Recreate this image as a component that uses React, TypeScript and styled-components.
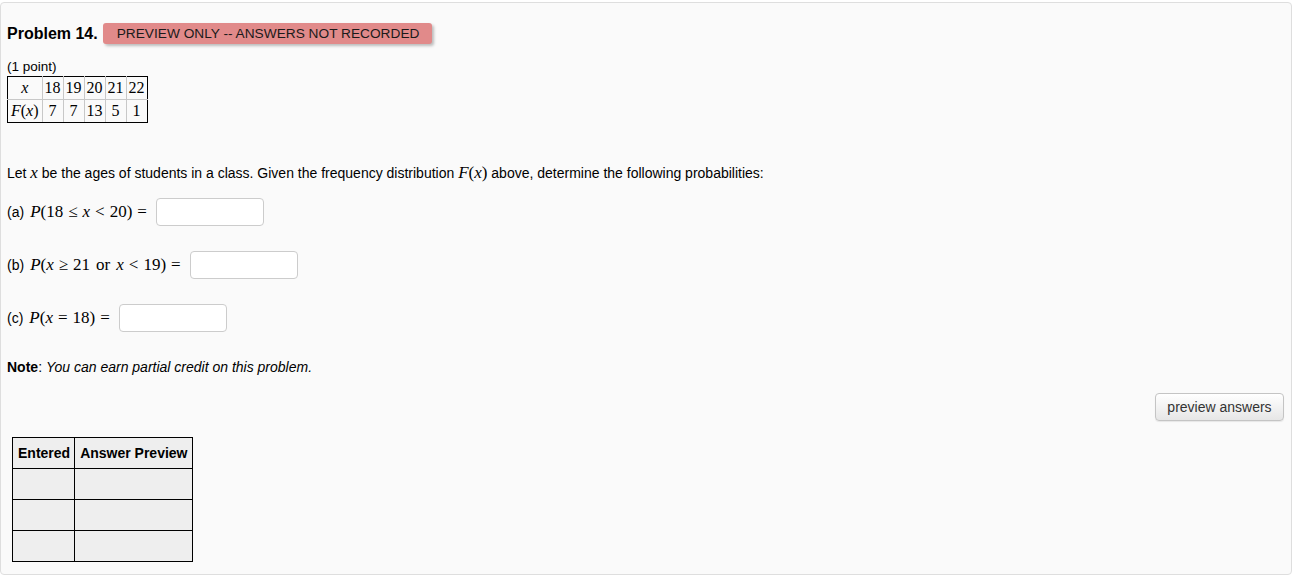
import styled, { createGlobalStyle } from "styled-components";

const GlobalStyle = createGlobalStyle`
  body {
    margin: 0;
    background: #ffffff;
    font-family: "Liberation Sans", Arial, sans-serif;
    color: #000;
  }
`;

// styled-components

const Panel = styled.div`
  margin-top: 2px;
  width: 1292px;
  height: 573px;
  box-sizing: border-box;
  border: 1px solid #dedede;
  border-radius: 4px;
  background: #fafafa;
  padding: 0 7px 0 6px;
`;

const Header = styled.div`
  display: flex;
  align-items: center;
  gap: 5px;
  margin-top: 20px;
  height: 21px;
`;

const Title = styled.h3`
  margin: 0;
  font-size: 16px;
  font-weight: bold;
`;

const Badge = styled.span`
  display: inline-block;
  height: 21px;
  line-height: 21px;
  padding: 0 13px 0 14px;
  background: #e18a8a;
  border-radius: 3px;
  box-shadow: 2px 2px 3px rgba(0, 0, 0, 0.25);
  font-size: 13.7px;
  color: #1a1a1a;
  white-space: nowrap;
`;

const Text = styled.div<{ $top: number }>`
  margin-top: ${(p) => p.$top}px;
  font-size: 14px;
  line-height: 18px;
`;

const Points = styled.div`
  margin-top: 15px;
  font-size: 13.5px;
  line-height: 16px;
`;

const DataTable = styled.table`
  margin-top: 1px;
  border-collapse: collapse;
  font-family: "Liberation Serif", "Times New Roman", serif;
  font-size: 16px;

  td {
    border: 1px solid #c8c8c8;
    height: 22px;
    padding: 0 2px;
    text-align: center;
    line-height: 20px;
  }

  td:first-child {
    padding: 0 3px;
    border-left-color: #000;
  }

  td:last-child {
    border-right-color: #000;
  }

  tr:first-child td {
    border-top-color: #000;
  }

  tr:last-child td {
    border-bottom-color: #000;
  }
`;

const MathVar = styled.i`
  font-family: "Liberation Serif", "Times New Roman", serif;
  font-size: 17px;
`;

const Math = styled.span`
  font-family: "Liberation Serif", "Times New Roman", serif;
  font-size: 17px;
  margin-left: 6px;
  white-space: nowrap;
`;

const Paren = styled.span`
  font-family: "Liberation Serif", "Times New Roman", serif;
  font-size: 17px;
`;

const Rel = styled.span`
  margin: 0 5px;
`;

const Word = styled.span`
  margin: 0 6px;
`;

const QuestionRow = styled.div<{ $top: number }>`
  display: flex;
  align-items: center;
  margin-top: ${(p) => p.$top}px;
  font-size: 14px;
  height: 28px;
`;

const AnswerInput = styled.input`
  width: 108px;
  height: 28px;
  box-sizing: border-box;
  margin-left: 4px;
  border: 1px solid #cccccc;
  border-radius: 4px;
  background: #ffffff;
  padding: 4px 6px;
`;

const NoteLabel = styled.b`
  font-weight: bold;
`;

const ButtonRow = styled.div`
  display: flex;
  justify-content: flex-end;
  margin-top: 17px;
`;

const PreviewButton = styled.button`
  height: 28px;
  width: 129px;
  font-family: "Liberation Sans", Arial, sans-serif;
  font-size: 14px;
  color: #333;
  background: linear-gradient(#ffffff, #e6e6e6);
  border: 1px solid #c4c4c4;
  border-radius: 4px;
  box-shadow: 0 1px 1px rgba(0, 0, 0, 0.08);
`;

const ResultsTable = styled.table`
  margin-top: 16px;
  margin-left: 5px;
  border-collapse: collapse;
  background: #eeeeee;

  th,
  td {
    border: 1.5px solid #000;
    height: 30px;
    padding: 0 4px 0 5px;
    font-size: 14px;
    text-align: left;
    white-space: nowrap;
  }

  th {
    font-weight: bold;
  }
`;

const Cell = styled.td<{ $w: number }>`
  width: ${(p) => p.$w}px;
`;

const ages = ["18", "19", "20", "21", "22"];
const counts = ["7", "7", "13", "5", "1"];

export default function App() {
  return (
    <>
      <GlobalStyle />
      <Panel>
        <Header>
          <Title>Problem 14.</Title>
          <Badge>PREVIEW ONLY -- ANSWERS NOT RECORDED</Badge>
        </Header>

        <Points>(1 point)</Points>
        <DataTable>
          <tbody>
            <tr>
              <td>
                <i>x</i>
              </td>
              {ages.map((a) => (
                <td key={a}>{a}</td>
              ))}
            </tr>
            <tr>
              <td>
                <i>F</i>(<i>x</i>)
              </td>
              {counts.map((c, i) => (
                <td key={i}>{c}</td>
              ))}
            </tr>
          </tbody>
        </DataTable>

        <Text $top={41}>
          Let <MathVar>x</MathVar> be the ages of students in a class. Given the frequency distribution{" "}
          <MathVar>F</MathVar>
          <Paren>(</Paren>
          <MathVar>x</MathVar>
          <Paren>)</Paren> above, determine the following probabilities:
        </Text>

        <QuestionRow $top={16}>
          (a)
          <Math>
            <i>P</i>(18<Rel>≤</Rel>
            <i>x</i>
            <Rel>&lt;</Rel>20)<Rel>=</Rel>
          </Math>
          <AnswerInput type="text" />
        </QuestionRow>

        <QuestionRow $top={25}>
          (b)
          <Math>
            <i>P</i>(<i>x</i>
            <Rel>≥</Rel>21<Word>or</Word>
            <i>x</i>
            <Rel>&lt;</Rel>19)<Rel>=</Rel>
          </Math>
          <AnswerInput type="text" />
        </QuestionRow>

        <QuestionRow $top={25}>
          (c)
          <Math>
            <i>P</i>(<i>x</i>
            <Rel>=</Rel>18)<Rel>=</Rel>
          </Math>
          <AnswerInput type="text" />
        </QuestionRow>

        <Text $top={26}>
          <NoteLabel>Note</NoteLabel>: <i>You can earn partial credit on this problem.</i>
        </Text>

        <ButtonRow>
          <PreviewButton>preview answers</PreviewButton>
        </ButtonRow>

        <ResultsTable>
          <thead>
            <tr>
              <th>Entered</th>
              <th>Answer Preview</th>
            </tr>
          </thead>
          <tbody>
            {[0, 1, 2].map((r) => (
              <tr key={r}>
                <Cell $w={52} />
                <Cell $w={107} />
              </tr>
            ))}
          </tbody>
        </ResultsTable>
      </Panel>
    </>
  );
}
